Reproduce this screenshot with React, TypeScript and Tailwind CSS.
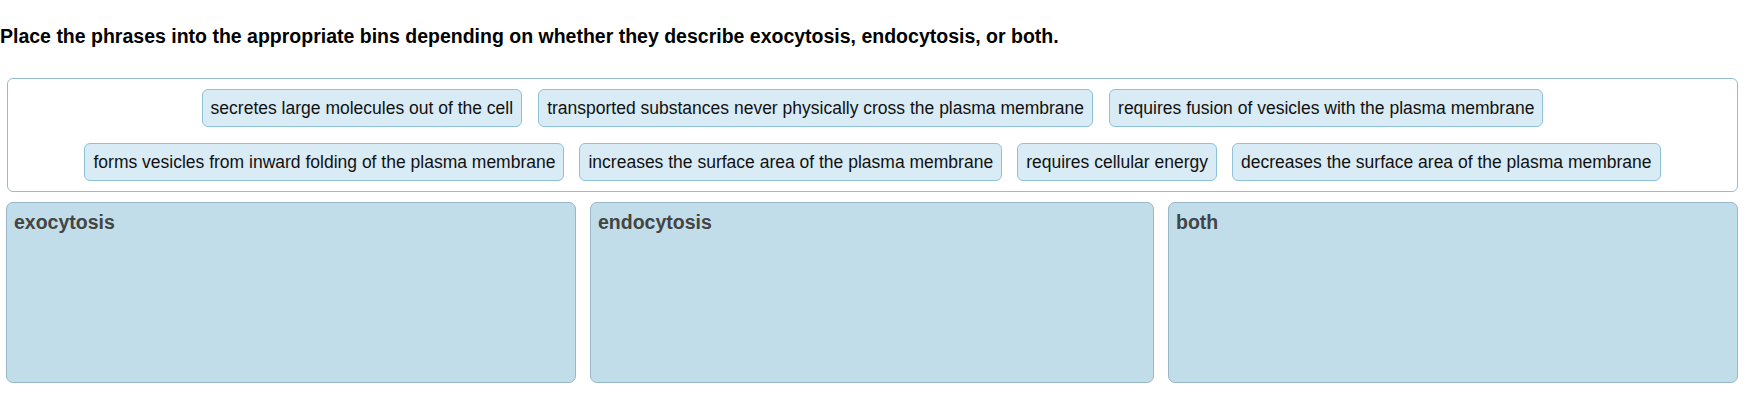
const ROW_ONE = [
  "secretes large molecules out of the cell",
  "transported substances never physically cross the plasma membrane",
  "requires fusion of vesicles with the plasma membrane",
];

const ROW_TWO = [
  "forms vesicles from inward folding of the plasma membrane",
  "increases the surface area of the plasma membrane",
  "requires cellular energy",
  "decreases the surface area of the plasma membrane",
];

const BINS = ["exocytosis", "endocytosis", "both"];

function Chip({ text }: { text: string }) {
  return (
    <div className="px-[8px] py-[8px] text-[17.5px] leading-[20px] text-[#111] bg-[#d9ebf5] border border-[#8ec2d8] rounded-[6px] whitespace-nowrap">
      {text}
    </div>
  );
}

export default function App() {
  return (
    <div className="w-[1750px] h-[400px] bg-white font-['Liberation_Sans',Arial,sans-serif]">
      <h1 className="pt-[25px] text-[19.5px] leading-[22px] font-bold text-black">
        Place the phrases into the appropriate bins depending on whether they describe exocytosis, endocytosis, or both.
      </h1>

      <div className="mt-[31px] ml-[7px] mr-[12px] py-[10px] flex flex-col gap-[16px] border border-[#94bccd] rounded-[6px]">
        <div className="flex justify-center gap-[16px]">
          {ROW_ONE.map((t) => (
            <Chip key={t} text={t} />
          ))}
        </div>
        <div className="flex justify-center gap-[15px]">
          {ROW_TWO.map((t) => (
            <Chip key={t} text={t} />
          ))}
        </div>
      </div>

      <div className="mt-[10px] ml-[6px] mr-[12px] grid grid-cols-[570px_564px_1fr] gap-[14px]">
        {BINS.map((b) => (
          <div
            key={b}
            className="h-[181px] px-[7px] pt-[8px] bg-[#c1dde9] border border-[#97b7c8] rounded-[7px]"
          >
            <div className="text-[19.5px] leading-[22px] font-bold text-[#444]">{b}</div>
          </div>
        ))}
      </div>
    </div>
  );
}
